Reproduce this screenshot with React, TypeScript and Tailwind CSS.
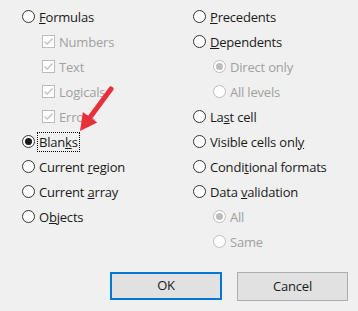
import React from "react";

type RowProps = {
  label: React.ReactNode;
  kind: "radio" | "check";
  checked?: boolean;
  disabled?: boolean;
  indent?: boolean;
  focused?: boolean;
};

const Radio = ({ checked, disabled }: { checked?: boolean; disabled?: boolean }) => (
  <span
    className={`flex h-[13px] w-[13px] shrink-0 items-center justify-center rounded-full border bg-white ${
      disabled ? "border-[#bcbcbc]" : "border-[#333333]"
    }`}
  >
    {checked && (
      <span
        className={`h-[7px] w-[7px] rounded-full ${disabled ? "bg-[#bcbcbc]" : "bg-[#1a1a1a]"}`}
      />
    )}
  </span>
);

const Check = () => (
  <span className="flex h-[13px] w-[13px] shrink-0 items-center justify-center border border-[#bcbcbc] bg-white">
    <svg width="11" height="11" viewBox="0 0 11 11">
      <path d="M1.5 5.5 L4.2 8.2 L9.5 2.5" fill="none" stroke="#bcbcbc" strokeWidth="1.2" />
    </svg>
  </span>
);

const Row = ({ label, kind, checked, disabled, indent, focused }: RowProps) => (
  <div className={`flex h-[25px] items-center gap-[4px] ${indent ? "pl-[20px]" : ""}`}>
    {kind === "radio" ? <Radio checked={checked} disabled={disabled} /> : <Check />}
    <span
      className={`leading-[18px] ${disabled ? "text-[#a0a0a0]" : "text-[#1a1a1a]"} ${
        focused ? "-ml-[2px] border border-dotted border-black px-[1px]" : ""
      }`}
    >
      {label}
    </span>
  </div>
);

const U = ({ children }: { children: React.ReactNode }) => <span className="underline">{children}</span>;

export default function App() {
  return (
    <div
      className="relative h-[311px] w-[358px] overflow-hidden bg-[#f0f0f0] text-[13px] tracking-[-0.2px]"
      style={{ fontFamily: '"Open Sans", "Noto Sans", sans-serif' }}
    >
      <div className="flex pt-[4px]">
        <div className="flex w-[193px] flex-col pl-[22px]">
          <Row kind="radio" label={<><U>F</U>ormulas</>} />
          <Row kind="check" indent disabled label="Numbers" />
          <Row kind="check" indent disabled label="Text" />
          <Row kind="check" indent disabled label="Logicals" />
          <Row kind="check" indent disabled label="Errors" />
          <Row kind="radio" checked focused label={<>Blan<U>k</U>s</>} />
          <Row kind="radio" label={<>Current <U>r</U>egion</>} />
          <Row kind="radio" label={<>Current <U>a</U>rray</>} />
          <Row kind="radio" label={<>O<U>b</U>jects</>} />
        </div>
        <div className="flex flex-col">
          <Row kind="radio" label={<><U>P</U>recedents</>} />
          <Row kind="radio" label={<><U>D</U>ependents</>} />
          <Row kind="radio" indent disabled checked label="Direct only" />
          <Row kind="radio" indent disabled label="All levels" />
          <Row kind="radio" label={<>La<U>s</U>t cell</>} />
          <Row kind="radio" label={<>Visible cells onl<U>y</U></>} />
          <Row kind="radio" label={<>Condi<U>t</U>ional formats</>} />
          <Row kind="radio" label={<>Data <U>v</U>alidation</>} />
          <Row kind="radio" indent disabled checked label="All" />
          <Row kind="radio" indent disabled label="Same" />
        </div>
      </div>
      <div className="mt-[18px] flex gap-[15px] pl-[110px]">
        <button className="h-[28px] w-[112px] border-2 border-[#0078d7] bg-[#e1e1e1] text-[#1a1a1a]">
          OK
        </button>
        <button className="h-[29px] w-[111px] border border-[#adadad] bg-[#e1e1e1] text-[#1a1a1a]">
          Cancel
        </button>
      </div>
      <svg className="absolute left-0 top-0" width="358" height="311">
        <line x1="111" y1="89" x2="91" y2="116" stroke="#e8303a" strokeWidth="5" strokeLinecap="round" />
        <polygon points="80,131 97.3,122.6 82.9,112" fill="#e8303a" />
      </svg>
    </div>
  );
}
